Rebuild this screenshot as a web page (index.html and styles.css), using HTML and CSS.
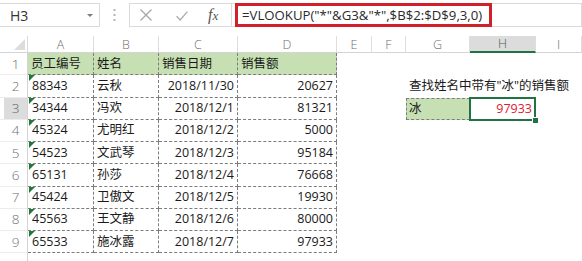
FILE: index.html
```html
<!DOCTYPE html>
<html lang="zh-CN">
<head>
<meta charset="utf-8">
<title>VLOOKUP</title>
<link rel="stylesheet" href="styles.css">
</head>
<body>
<div class="fbar">
  <div class="namebox"><span class="ref">H3</span><span class="dd"></span></div>
  <div class="grip"><svg width="3" height="13" viewBox="0 0 3 13"><rect x="0.5" y="0" width="2" height="2" fill="#b5b5b5"/><rect x="0.5" y="5" width="2" height="2" fill="#b5b5b5"/><rect x="0.5" y="10" width="2" height="2" fill="#b5b5b5"/></svg></div>
  <div class="tools">
    <svg class="ic-x" width="12" height="12" viewBox="0 0 12 12"><path d="M0.5 0.5 L11.5 11.5 M11.5 0.5 L0.5 11.5" stroke="#a6a6a6" stroke-width="1.3" fill="none"/></svg>
    <svg class="ic-ok" width="12" height="10" viewBox="0 0 12 10"><path d="M0.6 5.2 L4.2 9 L11.4 0.6" stroke="#ababab" stroke-width="1.3" fill="none"/></svg>
    <span class="fx">f<span class="fx-x">x</span></span>
  </div>
  <div class="finput"><div class="formula">=VLOOKUP("*"&amp;G3&amp;"*",$B$2:$D$9,3,0)</div></div>
</div>

<div class="sheet">
  <div class="corner"><span class="corner-tri"></span></div>
  <div class="ch">A</div><div class="ch">B</div><div class="ch">C</div><div class="ch">D</div><div class="ch">E</div><div class="ch">F</div><div class="ch">G</div><div class="ch ch-sel">H</div><div class="ch">I</div>

  <div class="rh">1</div>
  <div class="c d hd">员工编号</div><div class="c d hd">姓名</div><div class="c d hd">销售日期</div><div class="c d hd">销售额</div>
  <div class="c"></div><div class="c"></div><div class="c"></div><div class="c"></div><div class="c"></div>

  <div class="rh">2</div>
  <div class="c d tri">88343</div><div class="c d">云秋</div><div class="c d r">2018/11/30</div><div class="c d r">20627</div>
  <div class="c"></div><div class="c"></div><div class="c note">查找姓名中带有"冰"的销售额</div><div class="c"></div><div class="c"></div>

  <div class="rh rh-sel">3</div>
  <div class="c d tri">34344</div><div class="c d">冯欢</div><div class="c d r">2018/12/1</div><div class="c d r">81321</div>
  <div class="c"></div><div class="c"></div><div class="c key">冰</div><div class="c r sel">97933</div><div class="c"></div>

  <div class="rh">4</div>
  <div class="c d tri">45324</div><div class="c d">尤明红</div><div class="c d r">2018/12/2</div><div class="c d r">5000</div>
  <div class="c"></div><div class="c"></div><div class="c"></div><div class="c"></div><div class="c"></div>

  <div class="rh">5</div>
  <div class="c d tri">54523</div><div class="c d">文武琴</div><div class="c d r">2018/12/3</div><div class="c d r">95184</div>
  <div class="c"></div><div class="c"></div><div class="c"></div><div class="c"></div><div class="c"></div>

  <div class="rh">6</div>
  <div class="c d tri">65131</div><div class="c d">孙莎</div><div class="c d r">2018/12/4</div><div class="c d r">76668</div>
  <div class="c"></div><div class="c"></div><div class="c"></div><div class="c"></div><div class="c"></div>

  <div class="rh">7</div>
  <div class="c d tri">45424</div><div class="c d">卫傲文</div><div class="c d r">2018/12/5</div><div class="c d r">19930</div>
  <div class="c"></div><div class="c"></div><div class="c"></div><div class="c"></div><div class="c"></div>

  <div class="rh">8</div>
  <div class="c d tri">45563</div><div class="c d">王文静</div><div class="c d r">2018/12/6</div><div class="c d r">80000</div>
  <div class="c"></div><div class="c"></div><div class="c"></div><div class="c"></div><div class="c"></div>

  <div class="rh">9</div>
  <div class="c d tri">65533</div><div class="c d">施冰露</div><div class="c d r">2018/12/7</div><div class="c d r">97933</div>
  <div class="c"></div><div class="c"></div><div class="c"></div><div class="c"></div><div class="c"></div>

  <div class="rh rh-last"></div>
  <div class="c"></div><div class="c"></div><div class="c"></div><div class="c"></div>
  <div class="c"></div><div class="c"></div><div class="c"></div><div class="c"></div><div class="c"></div>
</div>
</body>
</html>
```

FILE: styles.css
```css
html, body {
  margin: 0;
  padding: 0;
  background: #ffffff;
}
body {
  width: 582px;
  height: 261px;
  overflow: hidden;
  font-family: "Open Sans", "Noto Sans CJK SC", sans-serif;
  color: #1a1a1a;
}

/* ---------- formula bar ---------- */
.fbar {
  display: flex;
  align-items: stretch;
  height: 24px;
  margin-top: 3px;
  margin-bottom: 9px;
}
.namebox {
  width: 100px;
  box-sizing: border-box;
  border: 1px solid #dadada;
  border-left: none;
  display: flex;
  align-items: center;
  padding-left: 10px;
  font-size: 14px;
  color: #333;
}
.dd {
  margin-left: auto;
  margin-right: 6px;
  width: 0;
  height: 0;
  border-left: 3px solid transparent;
  border-right: 3px solid transparent;
  border-top: 3px solid #7a7a7a;
}
.grip {
  width: 29px;
  display: flex;
  justify-content: center;
  align-items: center;
}
.tools {
  width: 103px;
  box-sizing: border-box;
  border: 1px solid #dadada;
  display: flex;
  align-items: center;
}
.ic-x { margin-left: 10px; }
.ic-ok { margin-left: 24px; margin-top: 2px; }
.fx {
  margin-left: 20px;
  font-family: "Liberation Serif", "DejaVu Serif", serif;
  font-style: italic;
  font-size: 16px;
  color: #555;
  line-height: 1;
}
.fx-x { font-size: 13px; }
.finput {
  flex: 1;
  box-sizing: border-box;
  border: 1px solid #dadada;
  border-left: none;
  display: flex;
  align-items: stretch;
  padding-left: 3px;
}
.formula {
  width: 257px;
  box-sizing: border-box;
  margin: -1px 0;
  border: 3px solid #d0202a;
  padding-left: 4px;
  display: flex;
  align-items: center;
  font-size: 13.2px;
  color: #2a2a2a;
  white-space: nowrap;
}

/* ---------- sheet grid ---------- */
.sheet {
  display: grid;
  grid-template-columns: 28px 66px 65px 79px 99px 35px 34px 64px 66px 46px;
  grid-template-rows: 17px repeat(9, 22.25px) 7.75px;
}
.corner {
  position: relative;
  border-right: 1px solid #d8d8d8;
  border-bottom: 1px solid #d4d4d4;
}
.corner-tri {
  position: absolute;
  right: 2px;
  bottom: 2px;
  width: 0;
  height: 0;
  border-left: 11px solid transparent;
  border-bottom: 11px solid #dcdcdc;
}
.ch {
  box-sizing: border-box;
  border-right: 1px solid #dedede;
  border-bottom: 1px solid #d4d4d4;
  display: flex;
  align-items: center;
  justify-content: center;
  font-size: 12.5px;
  font-weight: 300;
  color: #6f6f6f;
}
.ch-sel {
  background: #dcdcdc;
  border-bottom: 2px solid #217346;
  color: #4f5f55;
}
.rh {
  box-sizing: border-box;
  padding-left: 4px;
  background-clip: content-box;
  border-right: 1px solid #d4d4d4;
  border-bottom: 1px solid #ececec;
  display: flex;
  align-items: center;
  justify-content: center;
  font-size: 13.5px;
  font-weight: 300;
  color: #6f6f6f;
}
.rh-sel {
  background-color: #dcdcdc;
  color: #4f6a5c;
}
.rh-last {
  border-bottom: none;
}

.c {
  position: relative;
  box-sizing: border-box;
  display: flex;
  align-items: center;
  padding: 0 3px;
  font-size: 12.5px;
  line-height: 20px;
  white-space: nowrap;
  color: #1a1a1a;
}
.d {
  border-right: 1px dashed #7c7c7c;
  border-bottom: 1px dashed #7c7c7c;
}
.hd {
  background: #c6e0b4;
}
.r {
  justify-content: flex-end;
}
.tri {
  padding-left: 4px;
}
.tri::before {
  content: "";
  position: absolute;
  left: 1px;
  top: 0;
  width: 0;
  height: 0;
  border-top: 6px solid #1f7a3a;
  border-right: 6px solid transparent;
}
.note {
  overflow: visible;
}
.key {
  background: #c6e0b4;
  border: 1px dashed #7c7c7c;
  padding-left: 2px;
}
.sel {
  color: #e0202f;
  padding-right: 4px;
}
.sel::after {
  content: "";
  position: absolute;
  top: -1px;
  left: -1px;
  right: 0;
  bottom: -1px;
  border: 2px solid #217346;
}
.sel::before {
  content: "";
  position: absolute;
  right: -3px;
  bottom: -4px;
  width: 5px;
  height: 5px;
  background: #217346;
  border: 1px solid #ffffff;
  z-index: 1;
}
```
